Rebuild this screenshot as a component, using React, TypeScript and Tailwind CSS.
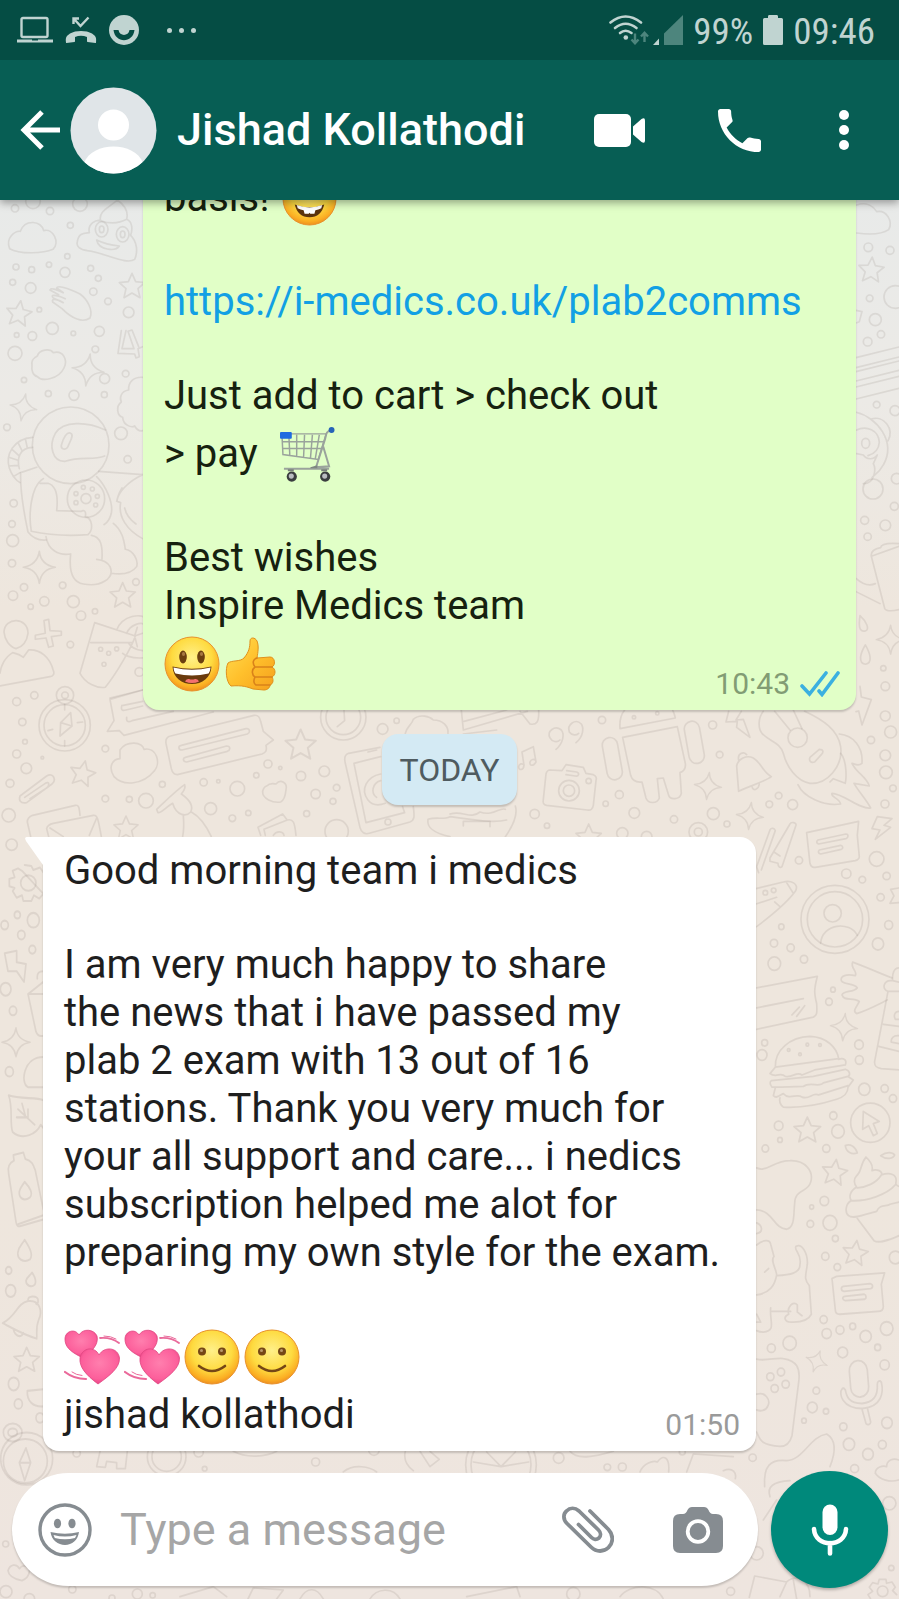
/**
 * Chat conversation screen
 * Status bar, contact header, message list and message composer
 */

import React, { useState } from 'react';

interface IconProps {
  className?: string;
}

type Dot = [number, number, number];

/* ---------- Wallpaper ---------- */

const STAR = 'M0 -38 L11 -13 L38 -10 L18 8 L24 35 L0 21 L-24 35 L-18 8 L-38 -10 L-11 -13 Z';
const SPARKLE = 'M0 -48 Q4 -8 48 0 Q6 6 0 48 Q-6 6 -48 0 Q-6 -8 0 -48 Z';
const CLOUD = 'M-68 28 C-82 -6 -50 -26 -36 -24 C-22 -62 28 -56 34 -26 C62 -34 84 10 62 30 C30 44 -40 44 -68 28 Z';

const Dots: React.FC<{ items: Dot[] }> = ({ items }) => (
  <>
    {items.map(([cx, cy, r]) => (
      <circle key={`${cx}-${cy}`} cx={cx} cy={cy} r={r} />
    ))}
  </>
);

const Wallpaper: React.FC = () => (
  <svg
    className="absolute inset-0 -z-10 h-full w-full"
    viewBox="0 0 899 1599"
    preserveAspectRatio="xMidYMin slice"
    fill="none"
    stroke="#7d756e"
    strokeOpacity="0.15"
    strokeWidth="5"
    strokeLinejoin="round"
    strokeLinecap="round"
    aria-hidden="true"
  >
    {/* left, beside the sent message */}
    <g transform="translate(0 200) scale(.3333)">
      <path d={CLOUD} transform="translate(97 118)" />
      <path d="M232 125 C236 98 252 100 268 98 C262 70 290 58 302 62 C294 34 326 24 352 0 C372 14 386 34 380 58 C398 66 398 88 392 106 C412 126 414 156 404 178 C380 196 320 160 262 152 C240 148 228 140 232 125 Z M302 62 C330 72 358 70 380 58" />
      <ellipse cx="305" cy="88" rx="19" ry="23" />
      <ellipse cx="368" cy="103" rx="19" ry="23" />
      <ellipse cx="305" cy="88" rx="7" ry="10" />
      <ellipse cx="368" cy="103" rx="7" ry="10" />
      <path d="M290 120 C310 130 338 136 358 138 C346 156 296 150 290 120 Z" />
      <path d="M150 270 L176 284 M152 270 C150 262 168 268 190 278 L170 264 C172 256 200 262 240 282 C262 298 280 330 270 354 C248 370 216 356 186 326 L158 306 C154 294 170 296 190 308 L160 294 C150 284 164 282 196 296" />
      <path d={STAR} transform="translate(396 258)" />
      <path d={STAR} transform="translate(57 340) rotate(8)" />
      <path d="M364 392 L354 460 L404 462 L408 474 L418 470 L414 446 L428 440 M378 392 L366 446 L402 446 L384 394 L396 390 L416 440" />
      <path d="M96 498 C92 478 104 472 112 468 C118 448 150 444 160 458 C190 450 204 480 192 504 C176 538 126 546 112 530 C98 526 94 510 96 498 Z" />
      <path d={SPARKLE} transform="translate(264 510) rotate(8)" />
      <path d={SPARKLE} transform="translate(70 622) rotate(10) scale(.85)" />
      <path d="M428 532 C400 530 384 548 386 570 C362 574 358 594 364 606 C346 620 352 648 368 652 C370 676 394 684 404 678 C412 692 420 694 428 692" />
      <circle cx="212" cy="736" r="115" />
      <path d="M316 690 C260 664 190 662 166 700 C146 736 156 786 196 784 C240 768 280 782 314 768" />
      <path d="M184 736 C190 712 202 694 212 700 C224 706 208 726 204 740 C198 752 182 748 184 736 Z" />
      <path d="M98 712 C40 716 16 764 28 804 C36 828 46 840 60 848 M98 742 C58 742 50 778 58 806 M76 716 L82 744 M54 728 L66 752 M36 748 L56 766 M26 772 L52 780 M26 798 L54 796 M40 830 L60 818" />
      <path d="M110 802 L62 818 C60 880 72 940 84 996 C98 1014 116 1022 138 1020 M130 836 C90 860 86 950 94 994 C140 1004 210 1008 264 1004 C282 988 276 954 256 950 C260 932 250 930 244 934 L170 932 C176 880 164 856 144 850 L120 850" />
      <circle cx="258" cy="896" r="56" />
      <circle cx="258" cy="896" r="15" />
      <path d="M138 1010 C144 1050 176 1068 212 1062 M212 1062 C208 1100 212 1146 250 1152 C300 1162 346 1136 330 1100 C322 1084 308 1080 290 1078 M306 1078 C308 1040 304 1010 274 1006 M290 830 C320 860 340 910 334 940 C328 966 318 970 312 974 M340 970 C366 990 372 1020 376 1048 C400 1052 416 1080 410 1100 C394 1122 360 1124 334 1120" />
      <path d="M296 814 L428 824 M428 824 C380 846 354 880 350 904 L362 908 C354 950 380 990 428 1016 M374 924 C380 952 400 966 408 972 M366 864 C356 880 350 900 352 904" />
      <path d={SPARKLE} transform="translate(118 1102)" />
      <path d={STAR} transform="translate(368 1186)" />
      <path d="M12 1296 C14 1250 84 1250 84 1300 C80 1330 62 1342 48 1346 C28 1340 14 1320 12 1296 Z M0 1458 L150 1430 C160 1430 164 1420 160 1412 C150 1370 120 1348 86 1350 L70 1372 C60 1364 46 1360 38 1358 C14 1372 2 1400 0 1420" />
      <path d="M132 1262 L146 1258 L150 1292 L184 1294 L184 1306 L154 1310 L160 1338 L146 1342 L138 1314 L106 1318 L106 1306 L136 1300 Z" />
      <path d="M284 1268 L406 1308 C396 1340 350 1420 316 1462 C290 1466 256 1450 240 1420 Z M272 1328 H396 M350 1290 C370 1240 428 1246 428 1250 M428 1374 C390 1376 372 1364 368 1360 M380 1300 C392 1270 428 1268 428 1272 M428 1352 C408 1350 392 1340 386 1330 M404 1308 L428 1300 M404 1308 L412 1282 M404 1308 L412 1340" />
      <path d="M330 1494 L428 1470" />
      <Dots
        items={[
          [45, 25, 11], [99, 4, 22], [150, 33, 11], [240, 12, 22], [211, 76, 9], [202, 169, 8], [272, 205, 9],
          [195, 217, 15], [295, 235, 9], [38, 247, 9], [92, 264, 16], [280, 275, 11], [324, 304, 10], [386, 337, 16],
          [118, 329, 7], [157, 385, 18], [298, 394, 15], [50, 405, 7], [97, 408, 13], [220, 400, 7], [45, 460, 21],
          [286, 448, 10], [314, 536, 15], [377, 521, 10], [72, 540, 8], [145, 581, 9], [222, 586, 15], [313, 584, 9],
          [21, 682, 10], [363, 700, 19], [383, 778, 11], [41, 910, 11], [36, 972, 10], [38, 1022, 18], [36, 1090, 11],
          [72, 1162, 11], [39, 1187, 14], [92, 1220, 8], [133, 1204, 14], [188, 1156, 10], [220, 1205, 18],
          [243, 1247, 14], [285, 1234, 8], [211, 1334, 10], [408, 1146, 10], [418, 1416, 13],
          [250, 862, 6], [277, 867, 6], [292, 889, 6], [287, 915, 6], [228, 881, 6], [228, 908, 6],
          [302, 1348, 6], [326, 1360, 6], [350, 1347, 6], [312, 1393, 6], [48, 201, 9], [95, 209, 9], [147, 194, 8]
        ]}
      />
    </g>

    {/* right, beside the sent message */}
    <g transform="translate(780 195) scale(.3333)">
      <path d="M230 30 C260 20 280 34 290 50 C320 44 340 80 326 104 C300 122 260 118 230 114" />
      <path d={STAR} transform="translate(274 224) rotate(4)" />
      <path d="M228 346 L246 350 L238 380 L228 384 M228 488 L357 456 M228 518 L357 486 M228 530 L357 498 M228 558 L357 526 M228 576 L357 544 M228 612 L357 580" />
      <path d="M228 652 C290 666 350 740 310 810 C296 836 282 840 276 848 M274 672 C310 660 344 700 324 738 M250 866 C286 866 288 820 280 806 L292 780 C280 796 260 794 250 780 L230 776 M228 706 C260 690 296 706 298 742 C296 768 280 778 264 782" />
      <ellipse cx="257" cy="745" rx="12" ry="15" />
      <circle cx="279" cy="882" r="30" />
      <path d="M357 1054 L274 1084 L314 1240 C320 1252 340 1248 357 1244 M274 1084 C272 1070 280 1062 302 1058 C304 1044 330 1044 357 1046 M228 1150 C250 1170 272 1172 286 1166 M228 1190 L300 1226" />
      <path d="M240 1262 C260 1280 270 1304 256 1308 C236 1312 236 1290 240 1262 Z M256 1350 C270 1374 280 1404 256 1408 C234 1404 240 1376 256 1350 Z" />
      <path d={SPARKLE} transform="translate(332 1334) scale(.9)" />
      <path d="M240 1474 L244 1506 L274 1514 L246 1590 L236 1548 L228 1550" />
      <Dots
        items={[
          [265, 157, 13], [330, 166, 12], [346, 306, 34], [269, 310, 10], [286, 374, 18], [303, 418, 11], [263, 440, 13],
          [290, 629, 10], [345, 647, 15], [350, 851, 16], [343, 934, 12], [254, 976, 12], [316, 991, 16], [263, 1025, 11],
          [310, 1420, 8], [316, 1474, 13]
        ]}
      />
    </g>

    {/* band around the day label */}
    <g transform="translate(0 690) scale(.3333)">
      <circle cx="194" cy="106" r="77" />
      <circle cx="194" cy="106" r="62" />
      <circle cx="195" cy="16" r="26" />
      <circle cx="195" cy="16" r="10" />
      <path d="M212 68 L216 108 L180 138 L182 98 Z M182 98 L216 108 M194 44 V60 M194 152 V168 M144 122 L158 118 M232 98 L248 96" />
      <path d="M428 0 L330 28 L342 92 L322 124 L358 122 L372 136 L640 66 M370 46 L428 34 M366 46 C360 64 372 62 378 60 L428 48 M380 82 C378 98 388 96 396 92 L520 64" />
      <path d="M512 138 L762 76 C774 74 780 84 782 94 L790 124 L820 150 L798 166 C802 184 796 188 786 192 L532 254 C520 254 516 244 514 236 L498 160 C496 146 502 140 512 138 Z M544 166 L738 116 C750 114 752 128 742 132 L546 180 C534 180 534 168 544 166 Z M556 202 L680 168 C692 168 692 180 682 184 L560 216 C548 216 548 204 556 202 Z" />
      <path d={STAR} transform="translate(902 164) scale(1.2)" />
      <path d={STAR} transform="translate(248 250) rotate(12)" />
      <path d={STAR} transform="translate(378 414) scale(.95)" />
      <path d="M360 180 C380 150 430 156 432 178 C470 170 484 220 462 244 C430 284 370 290 342 260 C324 232 336 208 360 206 Z" />
      <path d="M60 318 L140 258 C160 246 170 270 156 282 L80 338 C60 342 56 330 60 318 Z M74 322 L136 280 C150 272 148 288 140 294 L90 326" />
      <path d="M92 440 L82 396 C82 384 88 380 98 376 L226 346 C236 344 238 352 240 376 M146 440 L140 416 C142 406 150 402 160 400 L280 376 C292 374 294 384 304 440 M150 414 L190 440 M290 384 L268 436" />
      <path d="M470 358 C500 330 530 300 554 284 C558 296 550 304 544 312 C570 330 580 350 572 366 C560 380 530 380 518 340 C500 350 480 372 474 368 Z M548 440 C552 420 552 400 550 376 M574 366 C600 380 620 410 634 440" />
      <circle cx="1030" cy="82" r="68" />
      <circle cx="1030" cy="82" r="52" />
      <path d="M1032 60 L1034 92 L1012 110" />
      <path d="M1140 172 L1046 190 C1034 194 1032 204 1036 220 L1080 412 C1084 428 1094 434 1108 430 L1230 396 C1244 390 1244 380 1240 350 M1142 200 L1062 220 L1098 398 L1214 368 L1208 350 M1104 186 L1130 180" />
      <circle cx="1164" cy="396" r="9" />
      <path d="M1142 252 C1100 260 1080 300 1104 330 C1120 350 1140 346 1156 340 M1142 272 C1116 280 1112 310 1130 322" />
      <path d="M1216 130 C1220 110 1236 104 1240 88 C1260 70 1290 80 1300 90 C1330 90 1346 110 1344 130" />
      <path d="M800 288 C812 276 824 282 828 282 C842 266 864 278 858 300 C856 320 850 332 842 336 C820 340 786 326 788 304 C790 296 794 290 800 288 Z" />
      <path d="M782 436 L774 412 L848 372 L860 388 M796 436 L792 418 L862 390 C880 386 884 396 888 436 M820 436 C830 420 850 424 852 436" />
      <path d="M1284 388 C1310 380 1330 390 1350 380 C1420 390 1480 400 1520 390 M1284 388 C1280 410 1300 430 1350 440" />
      <Dots
        items={[
          [50, 35, 12], [103, 16, 11], [67, 96, 11], [75, 155, 7], [50, 192, 12], [127, 203, 4], [79, 235, 16],
          [30, 280, 12], [316, 176, 10], [316, 326, 10], [388, 328, 9], [438, 332, 22], [487, 283, 9], [611, 277, 11],
          [655, 274, 5], [632, 356, 18], [697, 385, 10], [745, 369, 8], [712, 296, 22], [769, 256, 8], [804, 222, 12],
          [841, 234, 5], [903, 258, 14], [973, 244, 16], [947, 312, 14], [1010, 293, 10], [999, 334, 9], [920, 371, 9],
          [1010, 424, 35], [1148, 117, 16], [1190, 92, 8], [26, 376, 20], [35, 464, 17]
        ]}
      />
    </g>

    {/* right of the day label */}
    <g transform="translate(450 650) scale(.3333)">
      <path d="M34 180 L40 240 M40 240 L232 184 M42 214 L170 180 M210 184 L240 222 C260 226 268 216 266 180 M40 252 L140 240" />
      <path d="M318 298 C340 280 344 252 334 240 C314 224 290 244 300 264 C306 276 322 278 330 270 M378 278 C400 260 402 234 394 222 C376 204 350 224 358 246 C366 258 380 256 386 250" />
      <path d="M216 306 L250 290 L258 336 C250 350 238 348 240 336 C244 326 252 328 256 330 M216 306 L222 346 C220 362 206 362 206 350 C208 340 216 340 222 344" />
      <path d="M300 360 L336 362 L348 344 L400 352 L408 370 L430 374 C440 378 440 386 438 392 L430 466 C428 478 422 482 412 480 L290 466 C280 464 278 458 280 448 L288 372 C290 364 294 360 300 360 Z M350 362 L380 366 C390 370 386 380 376 378 L348 374" />
      <circle cx="357" cy="422" r="31" />
      <circle cx="357" cy="422" r="17" />
      <circle cx="416" cy="393" r="8" />
      <path d="M510 236 C508 210 516 190 524 180 M510 236 L676 204 C674 192 670 186 668 180 M518 262 L682 230 L706 340 C708 356 702 364 690 368 L694 430 C690 450 660 450 656 436 L640 384 L622 386 L628 444 C622 462 594 462 588 444 L576 396 C556 398 546 390 542 376 Z" />
      <rect x="-23" y="-64" width="46" height="128" rx="23" transform="translate(487 326) rotate(-10)" />
      <rect x="-23" y="-64" width="46" height="128" rx="23" transform="translate(733 277) rotate(-10)" />
      <path d="M836 184 L828 216 L862 214 L860 232 L900 262 L880 208 L858 210 L874 184" />
      <path d={SPARKLE} transform="translate(774 408) rotate(6) scale(.85)" />
      <path d={SPARKLE} transform="translate(900 498) rotate(6) scale(.85)" />
      <path d="M866 424 L860 348 C864 326 890 314 910 324 C936 340 936 364 964 380 C950 392 890 412 866 424 Z M866 330 C862 310 880 304 890 314 M906 410 C910 426 926 418 928 402" />
      <path d="M940 184 C924 204 924 236 936 250 C960 276 990 276 1000 310 C1010 350 1040 394 1080 400 C1130 404 1180 350 1172 290 C1164 240 1120 210 1064 184 M974 184 L1020 240 M1030 180 L1056 236 M1080 322 L1108 298 C1120 298 1122 306 1114 314 L1094 336 C1082 340 1076 332 1080 322 Z" />
      <circle cx="1043" cy="263" r="29" />
      <path d="M1168 252 C1210 256 1240 290 1236 340 C1224 350 1216 342 1206 340 C1220 370 1250 380 1258 408 L1212 400 C1230 430 1250 450 1262 474 C1230 480 1180 430 1146 430 C1140 440 1170 446 1172 462 C1120 470 1060 440 1044 404 M1172 310 C1190 330 1190 380 1186 400 L1150 386 L1140 396" />
      <path d={STAR} transform="translate(416 560)" />
      <circle cx="745" cy="546" r="28" />
      <circle cx="745" cy="546" r="12" />
      <path d="M926 668 L920 650 L960 540 C964 532 974 534 976 542 L934 660 M960 624 L1020 522 C1024 514 1040 518 1038 526 L996 650 C990 656 984 650 984 640 L960 634 Z M972 606 L990 618" />
      <path d="M1070 548 L1226 514 L1222 556 L1228 620 C1228 628 1222 630 1216 632 L1096 652 C1086 654 1082 648 1080 640 Z M1104 570 L1188 552 C1196 552 1196 564 1188 566 L1106 582 C1100 580 1098 574 1104 570 Z M1108 600 L1172 586 C1180 588 1180 596 1174 598 L1112 612 C1104 610 1104 604 1108 600 Z" />
      <path d="M1282 500 L1326 506 L1302 526 L1322 532 L1276 568 L1290 540 L1266 536 Z" />
      <path d="M918 716 L1000 696 C1020 690 1050 700 1036 724 C1010 760 960 800 920 830 M918 762 L980 742 M974 756 L990 770 M1010 698 L1030 730" />
      <circle cx="946" cy="728" r="7" />
      <circle cx="971" cy="721" r="7" />
      <circle cx="1155" cy="808" r="102" />
      <circle cx="1155" cy="808" r="83" />
      <circle cx="1148" cy="790" r="26" />
      <path d="M1112 880 C1116 820 1200 812 1222 856" />
      <path d="M1346 714 L1322 718 L1332 738 L1320 760 L1346 758" />
      <path d="M0 492 C40 480 60 510 90 486 C130 500 150 470 166 478 M40 528 V514 H120 V530 M196 468 C206 500 180 540 166 560" />
      <Dots
        items={[
          [456, 210, 11], [788, 225, 12], [809, 314, 10], [508, 434, 12], [467, 461, 8], [254, 492, 14], [291, 527, 8],
          [553, 489, 16], [672, 508, 11], [790, 491, 18], [831, 522, 9], [517, 550, 17], [590, 560, 16], [986, 437, 10],
          [958, 463, 10], [1028, 464, 15], [1047, 631, 11], [1189, 671, 14], [1237, 689, 10], [1280, 627, 22],
          [1310, 678, 11], [1292, 742, 11], [1263, 270, 11], [1322, 246, 18], [1306, 198, 15], [1306, 316, 16],
          [1308, 367, 19], [1329, 415, 10], [1305, 462, 12], [552, 202, 5], [622, 190, 5]
        ]}
      />
    </g>

    {/* left, beside the received message */}
    <g transform="translate(0 830) scale(.3333 .4082)">
      <path d="M74 86 L94 88 L100 98 L120 92 L130 104 M130 156 L118 168 L102 160 L94 174 L70 174 L66 160 L50 166 L38 150 L44 142 L28 138 L28 120 L44 116 L38 100 L54 94 L66 100 Z" />
      <ellipse cx="85" cy="130" rx="23" ry="19" />
      <path d="M14 302 L50 296 L50 324 L78 328 L72 372 L50 346 L24 346 Z" />
      <path d={SPARKLE} transform="translate(48 520) scale(.88 .74)" />
      <path d="M130 372 L84 402 L108 494 C112 504 120 506 130 504 M84 402 H130 M112 364 C110 350 118 346 130 346 M130 556 C70 556 60 620 84 630 H130" />
      <path d="M26 650 C60 660 110 654 130 662 M26 650 C40 680 28 720 38 740 C70 762 110 744 122 722 L130 730 M54 684 L104 722 M66 670 L76 700 M50 704 H84 M84 684 V706" />
      <path d="M42 810 L40 796 L70 790 L76 806 M42 810 C26 816 22 826 26 842 L48 960 C50 972 56 972 62 970 L130 954 M76 806 C96 810 100 820 106 834 L130 930 M54 966 L130 944 M74 862 C90 876 100 890 90 900 C70 912 56 900 58 886 C60 876 68 870 74 862 Z" />
      <path d="M74 1004 C90 1024 100 1040 90 1052 C70 1062 50 1050 54 1034 C56 1020 68 1014 74 1004 Z M96 1084 C106 1096 110 1106 104 1114 C94 1122 78 1116 78 1104 C80 1096 90 1092 96 1084 Z" />
      <path d="M8 1208 C50 1190 50 1160 84 1154 C120 1150 128 1180 116 1200 C106 1220 112 1232 110 1246 C70 1236 36 1220 8 1208 Z M84 1152 C84 1140 110 1140 114 1150 C116 1160 110 1164 108 1160 M40 1222 C44 1240 62 1246 70 1232" />
      <path d={STAR} transform="translate(80 1298) scale(1 .8)" />
      <path d="M130 1370 L82 1374 C80 1400 100 1414 130 1412" />
      <ellipse cx="80" cy="1540" rx="78" ry="64" />
      <ellipse cx="76" cy="1546" rx="66" ry="54" />
      <ellipse cx="38" cy="1476" rx="28" ry="22" />
      <ellipse cx="38" cy="1476" rx="14" ry="10" />
      <path d="M78 1514 L92 1550 L74 1594 L58 1550 Z M58 1550 H92" />
      <Dots
        items={[
          [52, 208, 9], [14, 233, 11], [100, 221, 18], [64, 257, 11], [97, 293, 10], [17, 390, 16], [39, 443, 11],
          [28, 592, 12], [26, 1079, 9], [32, 1129, 15], [41, 1357, 16], [55, 1406, 12], [120, 1440, 12]
        ]}
      />
    </g>

    {/* right, beside the received message */}
    <g transform="translate(740 900) scale(.3333 .3571)">
      <path d="M50 246 L232 214 C222 250 222 260 230 290 C232 320 230 324 220 328 L50 362 M50 302 L190 276 M156 322 L178 300 M170 326 L194 296" />
      <path d={SPARKLE} transform="translate(312 356) rotate(6) scale(.85 .8)" />
      <path d="M338 174 C370 184 420 206 456 218 M338 174 C330 190 354 200 346 212 C320 206 300 212 304 226 C310 238 340 232 352 246 C340 260 310 252 306 266 C312 284 340 272 358 284 C350 300 336 310 350 318 C380 310 420 290 442 280" />
      <path d="M477 190 C462 190 456 206 458 226 C430 222 424 250 444 256 L404 452 C402 466 410 470 424 472 L477 476 M458 226 L477 230 M446 256 H477 M430 348 L477 354 M416 410 L477 424 M477 312 C464 312 460 324 466 334 H477 M477 380 C460 378 452 388 454 398 L477 402" />
      <path d="M106 468 C104 420 150 384 210 382 C260 384 290 412 296 444 Z M106 468 L90 486 C110 500 120 480 136 494 C160 498 170 478 186 490 L224 476 L316 462 C322 446 310 442 296 446 M94 506 L220 494 L316 474 C330 478 332 490 324 494 L250 512 C240 526 210 508 190 522 C150 524 110 524 96 524 C88 516 90 508 94 506 M324 494 L340 504 L324 524 C324 544 310 552 290 558 C230 576 170 582 130 580 C116 570 118 560 120 554 M106 526 L100 548 C110 558 120 546 130 542 C150 562 170 540 186 552 C210 560 216 538 236 546 L324 520" />
      <path d={STAR} transform="translate(202 644) scale(1.05 .95)" />
      <path d={STAR} transform="translate(284 762) rotate(8) scale(1 .95)" />
      <path d={STAR} transform="translate(346 988) rotate(8) scale(1 .92)" />
      <ellipse cx="391" cy="624" rx="59" ry="55" />
      <path d="M370 592 L418 620 L400 626 L412 654 L400 660 L386 632 L368 642 Z M316 688 C330 682 346 690 352 708 C336 714 318 706 316 688 Z M422 716 C440 704 458 706 464 714 C460 724 440 728 422 716 Z" />
      <path d="M50 750 C80 764 100 730 150 730 C196 728 222 760 212 790 C204 820 164 808 164 850 C160 880 166 916 140 922 C100 920 100 870 50 868 M50 904 C66 910 72 930 50 934" />
      <path d="M378 720 C390 730 400 744 396 758 C410 752 430 760 424 770 C450 762 472 768 468 790 C466 796 470 800 477 802 M378 720 C360 740 366 760 350 772 C340 782 342 796 350 804 C330 814 326 832 334 842 C316 850 314 876 326 884 C340 896 380 878 410 872 C420 850 440 860 450 852 L477 846 M352 806 C380 804 410 792 424 770 M334 842 C380 844 440 826 466 798 M352 892 L402 954 C412 960 440 956 477 940" />
      <path d="M50 966 C70 950 90 950 92 964 L102 998 C90 1010 108 1030 110 1050 C104 1080 90 1100 50 1106 M110 1052 C150 1050 180 1046 180 1020 C186 990 160 980 168 970 C186 960 204 990 202 1020 C198 1050 190 1060 208 1080 L214 1160 C204 1180 180 1182 160 1182 C130 1184 130 1166 146 1160 C140 1140 160 1120 172 1134 L172 1154 L186 1164 M152 1152 L92 1152 M92 1142 C88 1180 110 1206 70 1210 C60 1210 54 1208 50 1206 M50 1160 L62 1182 H50 M74 1042 L86 1032" />
      <path d="M276 1060 L290 1054 L434 1044 L424 1076 L430 1138 C430 1148 422 1152 414 1152 L300 1160 C290 1160 286 1156 286 1148 Z M310 1082 L390 1074 C400 1076 400 1086 392 1088 L312 1096 C302 1094 302 1084 310 1082 Z M314 1110 L372 1104 C380 1106 380 1116 374 1118 L316 1122 C306 1120 306 1112 314 1110 Z" />
      <path d={SPARKLE} transform="translate(230 1292) rotate(20) scale(.7 .65)" />
      <path d="M50 1286 C80 1292 110 1280 130 1284 C170 1290 182 1310 176 1350 L156 1500 C150 1520 140 1530 120 1530 C60 1526 60 1510 50 1490 M50 1384 C76 1376 92 1400 84 1416 C78 1432 60 1432 50 1428" />
      <rect x="330" y="1290" width="54" height="102" rx="27" transform="rotate(-5 357 1341)" />
      <path d="M306 1370 C296 1380 304 1424 368 1424 C424 1420 432 1380 424 1350 C418 1344 412 1348 412 1356 C414 1390 400 1406 366 1410 C326 1410 320 1390 316 1372 C312 1366 308 1366 306 1370 Z M366 1426 L378 1466 C384 1472 392 1468 392 1462 L382 1422" />
      <Dots
        items={[
          [124, 75, 8], [102, 121, 11], [152, 134, 11], [192, 166, 11], [103, 178, 19], [446, 70, 12],
          [414, 123, 17], [279, 251, 7], [267, 285, 10], [357, 405, 13], [358, 448, 12], [373, 530, 17], [434, 528, 11],
          [459, 556, 11], [74, 400, 9], [66, 434, 15], [280, 604, 11], [294, 648, 19], [116, 632, 13], [120, 672, 7],
          [76, 696, 10], [259, 696, 11], [253, 843, 13], [215, 860, 6], [211, 907, 10], [270, 904, 21], [286, 948, 9],
          [256, 998, 11], [292, 1028, 10], [466, 1001, 18], [251, 1175, 11], [260, 1214, 14], [300, 1204, 12],
          [338, 1194, 9], [440, 1200, 19], [377, 1222, 17], [413, 1253, 9], [308, 1267, 15], [149, 1241, 20],
          [94, 1255, 12], [434, 1302, 14], [91, 1335, 11], [123, 1322, 11], [104, 1368, 11], [137, 1356, 11],
          [229, 1374, 10], [217, 1421, 15], [258, 1432, 8], [192, 1458, 7], [310, 1475, 11], [327, 1524, 17],
          [441, 1464, 16], [384, 1552, 16], [427, 1525, 12], [146, 420, 4], [202, 405, 4], [240, 406, 4], [180, 432, 4]
        ]}
      />
    </g>

    {/* around the composer, left half */}
    <g transform="translate(0 1300) scale(.3333)">
      <path d="M300 454 L290 500 L316 502 L320 484 L350 488 L350 506 L376 506 L382 454" />
      <circle cx="500" cy="470" r="58" />
      <circle cx="500" cy="470" r="44" />
      <path d="M700 454 C740 476 800 470 830 454 M1030 516 C1060 490 1110 500 1130 516 M1260 454 L1290 500 L1318 478 L1290 454 M1216 454 C1210 480 1224 500 1240 512" />
      <path d="M24 812 C30 792 50 790 58 806 C70 790 90 800 88 816 C86 830 76 838 66 842 C46 838 26 830 24 812 Z" />
      <path d="M540 890 L640 860 L680 890 M744 897 L760 864 L850 870 L830 897 M900 897 C920 860 950 860 970 897 M1110 897 C1130 864 1180 860 1200 897" />
      <Dots
        items={[
          [230, 460, 11], [596, 457, 14], [614, 506, 7], [947, 486, 12], [1122, 450, 16], [17, 732, 9], [18, 875, 18],
          [88, 897, 16], [217, 868, 11], [412, 882, 15], [336, 894, 9], [458, 886, 8]
        ]}
      />
    </g>

    {/* around the composer, right half */}
    <g transform="translate(450 1300) scale(.3333)">
      <circle cx="153" cy="494" r="106" />
      <circle cx="153" cy="494" r="90" />
      <path d="M153 500 L70 486 M153 500 L110 456 M153 500 L196 456 M153 500 L236 486 M360 454 C380 480 430 472 490 454 M570 516 C580 490 610 480 622 486 C640 462 660 470 656 516 M710 516 L730 462 L850 470 M820 512 C850 500 860 520 856 536" />
      <path d="M944 560 C940 500 960 476 1010 482 C1060 480 1080 410 1130 402 C1160 420 1156 460 1140 500 M960 590 C950 560 970 545 1020 542 M940 660 L980 600" />
      <path d="M1276 520 C1276 500 1300 496 1310 500 C1310 480 1330 474 1346 480 M1276 520 C1290 540 1320 548 1346 540" />
      <path d="M898 892 L914 828 L1010 846 L990 890 M1010 846 C1040 820 1080 840 1080 890 M1040 897 L1030 840" />
      <circle cx="1298" cy="874" r="16" />
      <path d="M1288 838 L1308 838 L1310 850 L1326 846 L1336 862 L1328 872 L1340 884 M1288 838 L1284 852 L1268 848 L1258 862 L1268 874 L1254 884 L1262 897" />
      <path d="M50 890 L200 860 L210 890 M510 890 C540 850 620 850 640 897" />
      <Dots
        items={[
          [326, 474, 16], [472, 502, 10], [517, 501, 12], [697, 456, 9], [908, 473, 11], [842, 874, 12], [920, 760, 20],
          [1214, 506, 12], [1318, 610, 20], [1324, 804, 8], [370, 882, 20]
        ]}
      />
    </g>
  </svg>
);

/* ---------- Emoji ---------- */

const GradientDefs: React.FC = () => (
  <svg className="absolute h-0 w-0" aria-hidden="true">
    <defs>
      <radialGradient id="face" cx="50%" cy="38%" r="62%">
        <stop offset="0" stopColor="#fff08a" />
        <stop offset="0.6" stopColor="#fedb40" />
        <stop offset="0.88" stopColor="#fbae23" />
        <stop offset="1" stopColor="#ee9020" />
      </radialGradient>
      <linearGradient id="hand" x1="0" y1="0" x2="1" y2="1">
        <stop offset="0" stopColor="#ffdf55" />
        <stop offset="0.5" stopColor="#ffc02c" />
        <stop offset="1" stopColor="#f5a01d" />
      </linearGradient>
      <radialGradient id="heart" cx="50%" cy="40%" r="65%">
        <stop offset="0" stopColor="#ff7fae" />
        <stop offset="0.7" stopColor="#fc5f9b" />
        <stop offset="1" stopColor="#e23c80" />
      </radialGradient>
    </defs>
  </svg>
);

const GrinningEmoji: React.FC<IconProps> = ({ className }) => (
  <svg className={className} viewBox="0 0 56 56" role="img" aria-label="grinning face">
    <circle cx="28" cy="28" r="27" fill="url(#face)" stroke="#e8912c" strokeWidth="1" />
    <ellipse cx="19" cy="21" rx="3.8" ry="6.4" fill="#6b3f10" />
    <ellipse cx="37" cy="21" rx="3.8" ry="6.4" fill="#6b3f10" />
    <ellipse cx="19.5" cy="18" rx="1.6" ry="2" fill="#a67842" />
    <ellipse cx="37.5" cy="18" rx="1.6" ry="2" fill="#a67842" />
    <path d="M8.5 30.5 Q28 35 47.500 30.500 C47 42 38 48 28 48 S9 42 8.500 30.500Z" fill="#6a3a0d" />
    <path d="M9.500 31.500 Q28 36 46.500 31.500 C46.300 34 45.600 36 44.500 37.500 Q28 41.500 11.500 37.500 C10.400 36 9.700 34 9.500 31.500Z" fill="#fff" />
    <path d="M21 45.500 Q22 42.500 25 43 Q28 44 31 43 Q34 42.500 35 45.500 Q28 48.500 21 45.500Z" fill="#f4716f" />
  </svg>
);

const GoofyEmoji: React.FC<IconProps> = ({ className }) => (
  <svg className={className} viewBox="0 0 56 56" role="img" aria-label="smiling face">
    <circle cx="28" cy="28" r="27" fill="url(#face)" stroke="#e8912c" strokeWidth="1" />
    <path d="M13 23 Q18 15 23 23 M33 23 Q38 15 43 23" fill="none" stroke="#6b3f10" strokeWidth="3" strokeLinecap="round" />
    <path d="M13 34 Q28 40 43 34 Q40 47 28 47 Q16 47 13 34Z" fill="#5b330c" />
    <path d="M15 34.700 Q28 39.500 41 34.700 L40 38 Q37 39.500 34 40 L33 43.500 H28.800 L28 42.500 L27.200 43.500 H23 L22 40 Q19 39.500 16 38Z" fill="#fff" />
  </svg>
);

const SmileEmoji: React.FC<IconProps> = ({ className }) => (
  <svg className={className} viewBox="0 0 56 56" role="img" aria-label="slightly smiling face">
    <circle cx="28" cy="28" r="27" fill="url(#face)" stroke="#e8912c" strokeWidth="1" />
    <circle cx="18" cy="22.500" r="4" fill="#754716" />
    <circle cx="38" cy="22.500" r="4" fill="#754716" />
    <circle cx="17.500" cy="21.500" r="1.500" fill="#b9986b" />
    <circle cx="37.500" cy="21.500" r="1.500" fill="#b9986b" />
    <path d="M15 37 Q28 47 41 37" fill="none" stroke="#754716" strokeWidth="2.600" strokeLinecap="round" />
  </svg>
);

const ThumbEmoji: React.FC<IconProps> = ({ className }) => (
  <svg className={className} viewBox="0 0 56 56" role="img" aria-label="thumbs up">
    <path
      d="M4 27 C8 24 16 26 20 22 C25 16 26 11 26 5 C26 1 31 1 33 5 C35 10 34 16 33 22 L46 21 C51 21 52 29 48 31 C52 33 52 39 48 41 C50 44 49 48 46 49 C46 52 43 54 40 54 L29 53 C24 51 18 49 7 50 C2 46 1 33 4 27Z"
      fill="url(#hand)"
      stroke="#e0901c"
      strokeWidth="1"
    />
    <path d="M48 31 H32 M48 41 H31 M46 49 H32 M33 22 C29 23 28 27 31 31 C27 34 28 39 31 41 C29 45 30 48 32 49" fill="none" stroke="#d9821a" strokeWidth="1.600" strokeLinecap="round" />
  </svg>
);

const CartEmoji: React.FC<IconProps> = ({ className }) => (
  <svg className={className} viewBox="0 0 56 56" role="img" aria-label="shopping cart">
    <g fill="none" stroke="#9aa39c" strokeWidth="1.500">
      <path d="M2 8 L3 28 L39 33 L47 7 H2 M3 15 H44 M3 22 H42 M9 8 L10 29 M17 8 V30 M25 8 L24 31 M33 8 L31 32 M40 8 L36 32" />
      <path d="M53 3 C47 4 47 7 46 12 L37 40 M44 20 L50 40 L36 41 M4 42.500 H50" strokeWidth="2" />
    </g>
    <rect x="0" y="5" width="12" height="7" rx="1" fill="#1f6be0" />
    <path d="M31 41 L38 39 V42 H31Z" fill="#7e8781" />
    <circle cx="52.500" cy="3" r="3" fill="#2764b8" />
    <circle cx="12" cy="50.500" r="5.200" fill="#3a3d3f" />
    <circle cx="46" cy="50.500" r="5.200" fill="#3a3d3f" />
    <circle cx="11.500" cy="50" r="2.600" fill="#b9bcc0" />
    <circle cx="45.500" cy="50" r="2.600" fill="#b9bcc0" />
    <path d="M8 44 h6 M42 44 h6" stroke="#777f7a" strokeWidth="2" />
  </svg>
);

const HeartsEmoji: React.FC<IconProps> = ({ className }) => (
  <svg className={className} viewBox="0 0 56 56" role="img" aria-label="revolving hearts">
    <g stroke="#e0457f" strokeWidth="0.800">
      <path d="M17 28 C5 22 1 17 1 10 C1 2 11 -1 15 6 C19 -1 30 0 33 7 C35 15 28 24 17 28Z" fill="url(#heart)" />
      <path d="M34 55 C22 46 15 38 16 29 C18 18 31 17 35 26 C40 17 54 18 55.500 29 C56 39 45 47 34 55Z" fill="url(#heart)" />
    </g>
    <g fill="none" stroke="#ea6a9b" strokeLinecap="round">
      <path d="M36 9 Q47 8 55 14" strokeWidth="1.800" />
      <path d="M40 7 Q47 7 52 10" strokeWidth="1" />
      <path d="M1 43 Q10 50 22 50" strokeWidth="2.200" />
      <path d="M8 43 Q12 46 18 46.500" strokeWidth="1" />
    </g>
  </svg>
);

/* ---------- Icons ---------- */

const LaptopIcon: React.FC<IconProps> = ({ className }) => (
  <svg className={className} viewBox="0 0 36 28" aria-hidden="true">
    <rect x="4.500" y="2" width="26" height="19" rx="1.500" fill="none" stroke="currentColor" strokeWidth="2.400" />
    <path d="M0 23.500 H15 V24.500 H21 V23.500 H36 V26.500 H0Z" fill="currentColor" />
  </svg>
);

const MissedCallIcon: React.FC<IconProps> = ({ className }) => (
  <svg className={className} viewBox="0 0 32 28" aria-hidden="true">
    <path d="M8.500 8 V2.500 H14 M9 3 L15.500 10 L23.500 1.500" fill="none" stroke="currentColor" strokeWidth="2.400" />
    <path d="M1 26.500 C0.300 21 1.500 20 5 17.500 C11 14.200 21 14.200 27 17.500 C30.500 20 31.700 21 31 26.500 Q31 27 30.500 27 L22.500 26 Q22 26 22 25 V21 Q16 18.600 10 21 V25 Q10 26 9.500 26 L1.500 27 Q1 27 1 26.500Z" fill="currentColor" />
  </svg>
);

const SmileBadgeIcon: React.FC<IconProps> = ({ className }) => (
  <svg className={className} viewBox="0 0 30 30" aria-hidden="true">
    <circle cx="15" cy="15" r="15" fill="currentColor" />
    <path d="M4.500 15 H9.500 C10.500 21.500 19.500 21.500 20.500 15 H25.500 C24 28.500 6 28.500 4.500 15Z" fill="#054d44" />
  </svg>
);

const WifiIcon: React.FC<IconProps> = ({ className }) => (
  <svg className={className} viewBox="0 0 40 30" aria-hidden="true">
    <g fill="none" stroke="currentColor" strokeWidth="2.600" strokeLinecap="round">
      <path d="M1.500 7.500 Q16.500 -4.500 32 7.500" />
      <path d="M6 13 Q16.500 4.500 27.500 13" />
      <path d="M11 18 Q16.500 13.500 22.500 18" />
    </g>
    <circle cx="16.800" cy="22.500" r="2.300" fill="currentColor" />
    <path d="M26 18.500 V28 M22.500 24.500 L26 28.300 L29.500 24.500 M35.500 27 V18 M32 21.500 L35.500 17.700 L39 21.500" fill="none" stroke="#4d857d" strokeWidth="2.400" />
  </svg>
);

const SignalIcon: React.FC<IconProps> = ({ className }) => (
  <svg className={className} viewBox="0 0 30 30" aria-hidden="true">
    <path d="M6 30 V23.500 L0 30Z" fill="currentColor" />
    <path d="M11 30 V18.500 L30 0 V30Z" fill="#4d857d" />
  </svg>
);

const BatteryIcon: React.FC<IconProps> = ({ className }) => (
  <svg className={className} viewBox="0 0 20 30" aria-hidden="true">
    <path d="M6 0 H14 Q15 0 15 1.500 V3 H18.500 Q20 3 20 4.500 V28.500 Q20 30 18.500 30 H1.500 Q0 30 0 28.500 V4.500 Q0 3 1.500 3 H5 V1.500 Q5 0 6 0Z" fill="currentColor" />
  </svg>
);

const BackIcon: React.FC<IconProps> = ({ className }) => (
  <svg className={className} viewBox="0 0 40 40" fill="none" stroke="currentColor" strokeWidth="5" aria-hidden="true">
    <path d="M40 20 H4 M22 2 L4 20 L22 38" />
  </svg>
);

const AvatarIcon: React.FC<IconProps> = ({ className }) => (
  <svg className={className} viewBox="0 0 87 87" role="img" aria-label="Profile photo">
    <clipPath id="avatar">
      <circle cx="43.500" cy="43.500" r="43" />
    </clipPath>
    <g clipPath="url(#avatar)">
      <rect width="87" height="87" fill="#e0e5e8" />
      <circle cx="43.500" cy="38" r="15.500" fill="#fff" />
      <path d="M14 76 C22 54 65 54 73 76 L73 87 H14Z" fill="#fff" />
    </g>
  </svg>
);

const VideoIcon: React.FC<IconProps> = ({ className }) => (
  <svg className={className} viewBox="0 0 51 33" fill="currentColor" aria-hidden="true">
    <rect width="37" height="33" rx="5" />
    <path d="M39 12.500 L47.500 5 Q51 3 51 6.500 V26.500 Q51 30 47.500 28 L39 20.500Z" />
  </svg>
);

const PhoneIcon: React.FC<IconProps> = ({ className }) => (
  <svg className={className} viewBox="0 0 18 18" fill="currentColor" aria-hidden="true">
    <path d="M3.620 7.790c1.440 2.830 3.760 5.140 6.590 6.590l2.200-2.200c.270-.270.670-.360 1.020-.240 1.120.370 2.330.570 3.570.570.550 0 1 .450 1 1V17c0 .550-.450 1-1 1-9.390 0-17-7.610-17-17 0-.550.450-1 1-1h3.500c.550 0 1 .450 1 1 0 1.250.200 2.450.570 3.570.110.350.030.740-.250 1.020l-2.200 2.200z" />
  </svg>
);

const MoreIcon: React.FC<IconProps> = ({ className }) => (
  <svg className={className} viewBox="0 0 10 40" fill="currentColor" aria-hidden="true">
    <circle cx="5" cy="5" r="5" />
    <circle cx="5" cy="20" r="5" />
    <circle cx="5" cy="35" r="5" />
  </svg>
);

const ReadIcon: React.FC<IconProps> = ({ className }) => (
  <svg className={className} viewBox="0 0 40 26" fill="none" stroke="#3bb0e0" strokeWidth="3.600" strokeLinecap="round" aria-label="Read" role="img">
    <path d="M2 15 L9.500 23 L26 2 M19 20 L22 23.500 L38 2" />
  </svg>
);

const FaceIcon: React.FC<IconProps> = ({ className }) => (
  <svg className={className} viewBox="0 0 54 54" aria-hidden="true">
    <circle cx="27" cy="27" r="25" fill="none" stroke="currentColor" strokeWidth="3.400" />
    <ellipse cx="19.500" cy="20.500" rx="3.600" ry="4.800" fill="currentColor" />
    <ellipse cx="34" cy="20.500" rx="3.600" ry="4.800" fill="currentColor" />
    <path d="M12.500 29 Q27 32.500 41 29 C40 37 34 42 27 42 S13.500 37 12.500 29Z" fill="currentColor" />
    <path d="M15.500 32 Q27 35 38.500 32 L37 35 Q27 37.500 16.800 35Z" fill="#fff" />
  </svg>
);

const ClipIcon: React.FC<IconProps> = ({ className }) => (
  <svg className={className} viewBox="0 0 52 48" fill="none" stroke="currentColor" strokeWidth="3.800" strokeLinecap="round" strokeLinejoin="round" aria-hidden="true">
    <path d="M28 5 L46.500 23.500 C52.500 30 50.500 38 46.500 41.500 C42 46 34.500 46.500 29 41 L5 17.500 C0.500 13 1.500 7.500 4.500 5 C8 1.500 13 1.500 17 5 L36.500 24 C39 26.500 39 30 37 32 C34.500 34 31.500 33.500 29.500 31.500 L16.500 18.500" />
  </svg>
);

const CameraIcon: React.FC<IconProps> = ({ className }) => (
  <svg className={className} viewBox="0 0 50 46" aria-hidden="true">
    <path d="M19 0 H31 Q34 0 35.500 3 Q37 7 40 7 H43 Q50 7 50 14 V39 Q50 46 43 46 H7 Q0 46 0 39 V14 Q0 7 7 7 H10 Q13 7 14.500 3 Q16 0 19 0Z" fill="currentColor" />
    <circle cx="25" cy="24.500" r="10.300" fill="none" stroke="#fff" strokeWidth="3.800" />
  </svg>
);

const MicIcon: React.FC<IconProps> = ({ className }) => (
  <svg className={className} viewBox="0 0 38 52" aria-hidden="true">
    <rect x="11.500" y="0.500" width="15" height="30.500" rx="7.500" fill="currentColor" />
    <path d="M3 25 C4 44 34 44 35 25 M19 39 V49.500" fill="none" stroke="currentColor" strokeWidth="4.600" strokeLinecap="round" />
  </svg>
);

/* ---------- Screen sections ---------- */

const StatusBar: React.FC = () => (
  <div className="flex h-[60px] items-center justify-between bg-[#054d44] pr-6 pl-[17px] text-[#c0d4d1]">
    <div className="flex items-center gap-3">
      <LaptopIcon className="h-7 w-9" />
      <MissedCallIcon className="h-7 w-8" />
      <SmileBadgeIcon className="size-[30px]" />
      <div className="ml-4 flex gap-[7px]">
        <span className="size-[5px] rounded-full bg-current" />
        <span className="size-[5px] rounded-full bg-current" />
        <span className="size-[5px] rounded-full bg-current" />
      </div>
    </div>
    <div className="flex items-center gap-[10px]">
      <div className="flex items-center gap-1">
        <WifiIcon className="h-[30px] w-10" />
        <SignalIcon className="size-[30px]" />
      </div>
      <span className="pt-[3px] font-['Roboto_Condensed',Roboto,sans-serif] text-[37px] leading-10">99%</span>
      <BatteryIcon className="h-[30px] w-5" />
      <span className="pt-[3px] font-['Roboto_Condensed',Roboto,sans-serif] text-[37px] leading-10">09:46</span>
    </div>
  </div>
);

const ChatHeader: React.FC<{ name: string }> = ({ name }) => (
  <header className="flex h-[140px] items-center bg-[#075e54] pr-[50px] pl-5 text-white">
    <button type="button" aria-label="Back" className="mr-[10px]">
      <BackIcon className="size-10" />
    </button>
    <AvatarIcon className="size-[87px] shrink-0" />
    <h1 className="ml-5 flex-1 truncate text-[45px] leading-[56px] font-medium">{name}</h1>
    <div className="flex items-center">
      <button type="button" aria-label="Video call">
        <VideoIcon className="h-[33px] w-[51px]" />
      </button>
      <button type="button" aria-label="Voice call" className="ml-[73px]">
        <PhoneIcon className="size-[43px]" />
      </button>
      <button type="button" aria-label="More options" className="ml-[78px]">
        <MoreIcon className="h-10 w-[10px]" />
      </button>
    </div>
  </header>
);

const EmojiRow: React.FC<{ children: React.ReactNode }> = ({ children }) => (
  <div className="flex h-[68px] items-center gap-1">{children}</div>
);

const SentMessage: React.FC = () => (
  <article className="mr-[43px] ml-[143px] shrink-0 rounded-2xl bg-[#e1ffc7] pt-[10px] pr-4 pl-[21px] text-[#16210f] shadow-[0_2px_2px_rgba(0,0,0,0.18)]">
    <div className="flex flex-col gap-[46px]">
      <div className="flex h-[68px] items-center gap-3">
        <span>basis!</span>
        <GoofyEmoji className="size-[55px]" />
      </div>
      <a href="https://i-medics.co.uk/plab2comms" className="text-[#12a0e4]">
        https://i-medics.co.uk/plab2comms
      </a>
      <div>
        <p>Just add to cart &gt; check out</p>
        <div className="flex h-[68px] items-center gap-[22px]">
          <span>&gt; pay</span>
          <CartEmoji className="size-[55px]" />
        </div>
      </div>
      <div>
        <p>Best wishes</p>
        <p>Inspire Medics team</p>
        <div className="flex items-end justify-between">
          <div className="pb-3">
            <EmojiRow>
              <GrinningEmoji className="size-[56px]" />
              <ThumbEmoji className="size-[56px]" />
            </EmojiRow>
          </div>
          <div className="flex items-center gap-[10px] pb-2">
            <time className="text-[30px] leading-9 text-[#829c74]">10:43</time>
            <ReadIcon className="h-[26px] w-10" />
          </div>
        </div>
      </div>
    </div>
  </article>
);

const ReceivedMessage: React.FC = () => (
  <article className="relative mr-[143px] ml-[43px] shrink-0 rounded-2xl rounded-tl-none bg-white pt-[10px] pr-4 pl-[21px] text-[#1e1e1e] shadow-[0_2px_2px_rgba(0,0,0,0.18)]">
    <svg className="absolute top-0 -left-[18px] h-7 w-[19px]" viewBox="0 0 19 28" aria-hidden="true">
      <path d="M19 0 H2 Q-1 0 1 4 L18 28 H19Z" fill="#fff" />
    </svg>
    <div className="flex flex-col gap-[46px]">
      <p>Good morning team i medics</p>
      <p>
        I am very much happy to share
        <br />
        the news that i have passed my
        <br />
        plab 2 exam with 13 out of 16
        <br />
        stations. Thank you very much for
        <br />
        your all support and care... i nedics
        <br />
        subscription helped me alot for
        <br />
        preparing my own style for the exam.
      </p>
      <div>
        <EmojiRow>
          <HeartsEmoji className="size-[56px]" />
          <HeartsEmoji className="size-[56px]" />
          <SmileEmoji className="size-[56px]" />
          <SmileEmoji className="size-[56px]" />
        </EmojiRow>
        <div className="flex items-end justify-between">
          <p className="pb-3">jishad kollathodi</p>
          <time className="pb-2 text-[30px] leading-9 text-[#9a9a9a]">01:50</time>
        </div>
      </div>
    </div>
  </article>
);

const Composer: React.FC = () => {
  const [message, setMessage] = useState('');

  return (
    <form
      className="flex items-center gap-[13px] pr-[11px] pb-[11px] pl-3"
      onSubmit={(e) => {
        e.preventDefault();
        setMessage('');
      }}
    >
      <div className="flex h-[113px] min-w-0 flex-1 items-center rounded-full bg-white pr-[35px] pl-[26px] text-[#868c91] shadow-[0_2px_2px_rgba(0,0,0,0.18)]">
        <button type="button" aria-label="Emoji">
          <FaceIcon className="size-[54px]" />
        </button>
        <input
          type="text"
          aria-label="Message"
          placeholder="Type a message"
          value={message}
          onChange={(e) => setMessage(e.target.value)}
          className="ml-7 min-w-0 flex-1 bg-transparent text-[45px] leading-[56px] text-[#1e1e1e] outline-none placeholder:text-[#a6a6a6]"
        />
        <button type="button" aria-label="Attach">
          <ClipIcon className="h-12 w-[52px]" />
        </button>
        <button type="button" aria-label="Camera" className="ml-[59px]">
          <CameraIcon className="h-[46px] w-[50px]" />
        </button>
      </div>
      <button
        type="button"
        aria-label="Record voice message"
        className="flex size-[117px] items-center justify-center rounded-full bg-[#00897b] text-white shadow-[0_2px_3px_rgba(0,0,0,0.25)]"
      >
        <MicIcon className="h-[52px] w-[38px]" />
      </button>
    </form>
  );
};

const App: React.FC = () => (
  <div className="relative isolate flex h-screen flex-col overflow-hidden bg-[linear-gradient(to_bottom,#e8eae9_12%,#eceae6_25%,#eee6dd_38%,#eee6dd_75%,#eee5df_100%)] font-['Roboto',sans-serif] text-[40px] leading-[48px]">
    <GradientDefs />
    <Wallpaper />
    <div className="z-10 shrink-0 shadow-[0_3px_8px_rgba(0,0,0,0.35)]">
      <StatusBar />
      <ChatHeader name="Jishad Kollathodi" />
    </div>
    <main className="flex min-h-0 flex-1 flex-col justify-end overflow-hidden pb-5">
      <SentMessage />
      <div className="mt-6 mb-8 flex h-[71px] shrink-0 items-center self-center rounded-2xl bg-[#d4eaf4] px-[18px] text-[32px] leading-9 text-[#4f5b60] shadow-[0_2px_2px_rgba(0,0,0,0.18)]">
        TODAY
      </div>
      <ReceivedMessage />
    </main>
    <Composer />
  </div>
);

export default App;
